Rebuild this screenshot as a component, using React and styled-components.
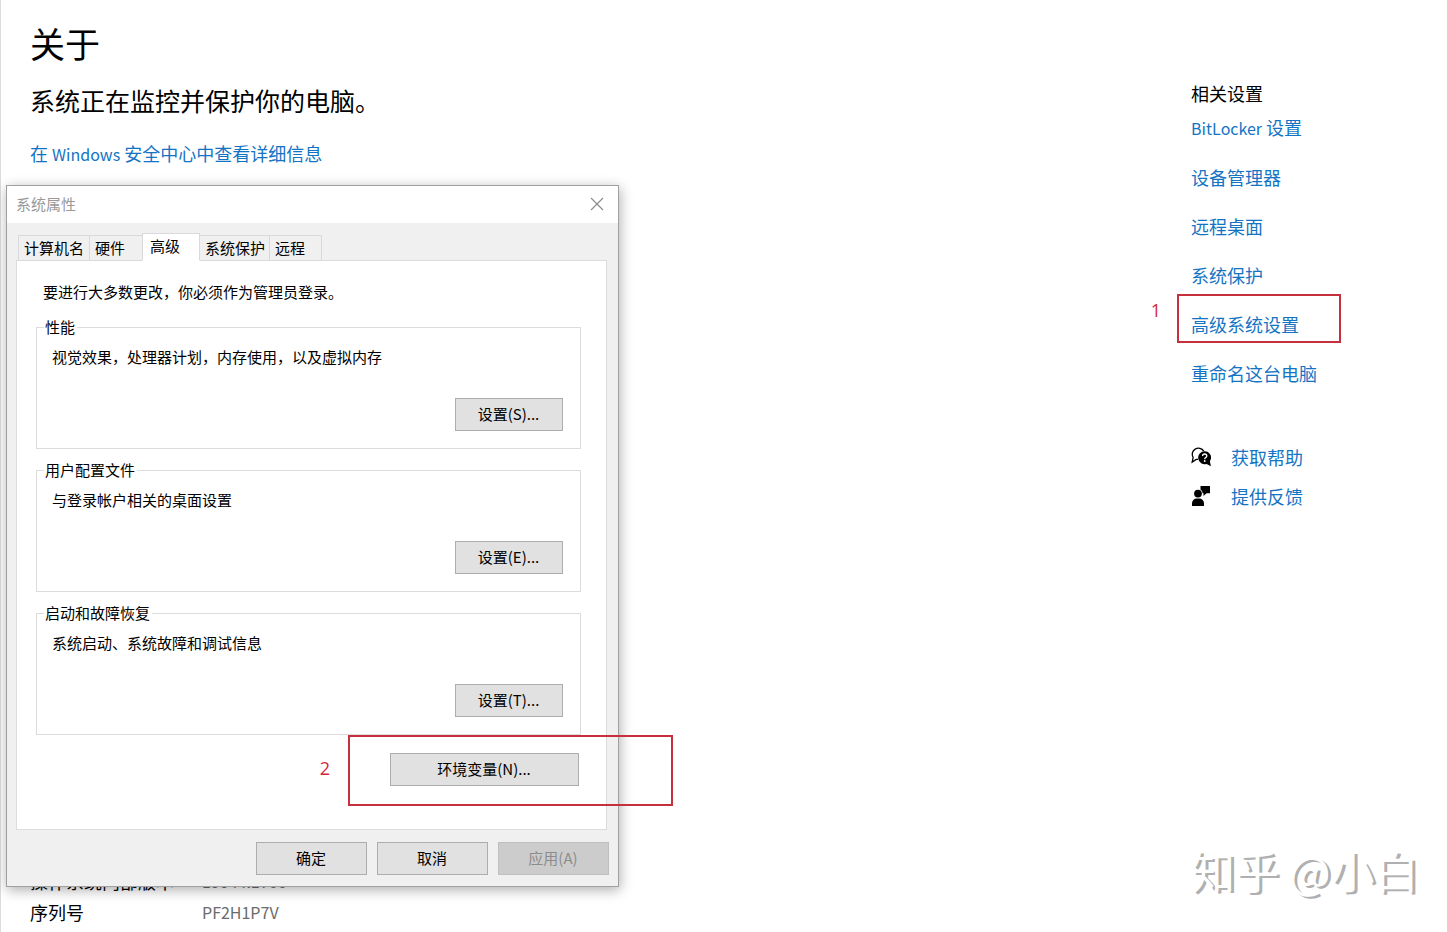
import React from "react";
import styled, { createGlobalStyle } from "styled-components";

const GlobalStyle = createGlobalStyle`
  *, *::before, *::after { box-sizing: border-box; }
  body { margin: 0; background: #fff; }
  body, button {
    font-family: "Noto Sans CJK SC", "Open Sans", sans-serif;
  }
  h1, h2, p, ul, dl, dd { margin: 0; padding: 0; font-weight: 400; }
  ul { list-style: none; }
`;

const Page = styled.div`
  position: relative;
  display: flex;
  justify-content: space-between;
  min-height: 100vh;
  border-left: 1px solid #dcdcdc;
  color: #000;
`;

const Main = styled.main`
  display: flex;
  flex-direction: column;
  align-items: flex-start;
  flex: 1;
  padding: 18px 0 4px 29px;
`;

const Title = styled.h1`
  font-size: 35px;
  line-height: 50px;
`;

const Status = styled.p`
  margin-top: 14px;
  font-size: 25px;
  line-height: 36px;
`;

const Link = styled.a`
  color: #1474c4;
  font-size: 18px;
  line-height: 26px;
  text-decoration: none;
  white-space: nowrap;
`;

const Latin = styled.span`
  font-size: 16px;
`;

const StatusLink = styled(Link)`
  margin-top: 22px;
`;

const Specs = styled.dl`
  display: grid;
  grid-template-columns: 172px auto;
  margin-top: auto;
  font-size: 18px;
  line-height: 31px;
`;

const SpecValue = styled.dd`
  color: #6b6b6b;
  font-size: 16px;
`;

const Aside = styled.aside`
  display: flex;
  flex-direction: column;
  width: 256px;
  padding-top: 80px;
`;

const AsideTitle = styled.h2`
  font-size: 18px;
  line-height: 26px;
`;

const LinkList = styled.ul`
  display: flex;
  flex-direction: column;
  gap: 23px;
  margin-top: 8px;
`;

const LinkItem = styled.li`
  position: relative;
  display: flex;
`;

const HelpList = styled.ul`
  display: flex;
  flex-direction: column;
  gap: 13px;
  margin-top: 58px;
`;

const HelpItem = styled.li`
  display: flex;
  align-items: center;
  gap: 20px;
`;

const Frame = styled.span`
  position: absolute;
  top: ${(p) => p.$top}px;
  left: ${(p) => p.$left}px;
  width: ${(p) => p.$width}px;
  height: ${(p) => p.$height}px;
  border: 2px solid #c5303c;
  pointer-events: none;
`;

const Step = styled.span`
  position: absolute;
  right: 100%;
  top: 50%;
  margin: ${(p) => p.$margin};
  color: #d4283a;
  font-family: "Open Sans", "Noto Sans", sans-serif;
  font-size: 18px;
  line-height: 24px;
`;

const Watermark = styled.div`
  margin: auto 41px 32px auto;
  color: #fff;
  font-size: 44px;
  line-height: 60px;
  white-space: nowrap;
  text-shadow: 3px 2px 0 #b0b0b0;
`;

const Window = styled.section`
  position: absolute;
  top: 185px;
  left: 5px;
  width: 613px;
  border: 1px solid #a0a0a0;
  background: #f0f0f0;
  box-shadow: 1px 3px 12px rgba(0, 0, 0, 0.32);
  font-size: 15px;
  line-height: 20px;
`;

const TitleBar = styled.header`
  display: flex;
  align-items: center;
  justify-content: space-between;
  height: 37px;
  padding: 0 14px 2px 9px;
  background: #fff;
  color: #999;
`;

const WindowTitle = styled.h2`
  font-size: 15px;
`;

const CloseButton = styled.button`
  display: flex;
  padding: 0;
  border: 0;
  background: none;
`;

const WindowBody = styled.div`
  padding: 10px 9px 11px;
`;

const Tabs = styled.div`
  display: flex;
  align-items: flex-end;
  height: 28px;
  margin: 0 0 -1px 2px;
`;

const Tab = styled.button`
  position: relative;
  width: ${(p) => p.$width}px;
  height: ${(p) => (p.$active ? 28 : 26)}px;
  margin-right: -1px;
  padding: 0 0 ${(p) => (p.$active ? 2 : 0)}px ${(p) => (p.$active ? 7 : 5)}px;
  border: 1px solid #d9d9d9;
  border-bottom-color: ${(p) => (p.$active ? "#fff" : "#d9d9d9")};
  background: ${(p) => (p.$active ? "#fff" : "#f0f0f0")};
  z-index: ${(p) => (p.$active ? 1 : 0)};
  color: #000;
  font-size: 15px;
  line-height: 24px;
  text-align: left;
  white-space: nowrap;
`;

const Panel = styled.div`
  width: 591px;
  padding: 21px 25px 43px 19px;
  border: 1px solid #dcdcdc;
  background: #fff;
`;

const Notice = styled.p`
  padding-left: 7px;
`;

const Groups = styled.div`
  display: flex;
  flex-direction: column;
  gap: 11px;
  margin-top: 15px;
`;

const Group = styled.fieldset`
  min-width: 0;
  margin: 0;
  padding: 10px 17px 17px 15px;
  border: 1px solid #dcdcdc;
`;

const Legend = styled.legend`
  margin-left: -8px;
  padding: 0 2px 0 1px;
`;

const ButtonRow = styled.div`
  display: flex;
  justify-content: flex-end;
  gap: ${(p) => p.$gap || 0}px;
  margin: ${(p) => p.$margin || 0};
`;

const Button = styled.button`
  width: ${(p) => p.$width}px;
  height: 33px;
  padding: 0 1px 2px 0;
  border: 1px solid #adadad;
  background: #e1e1e1;
  color: #000;
  font-size: 15px;
  line-height: 20px;

  &:disabled {
    border-color: #bfbfbf;
    background: #ccc;
    color: #8c8c8c;
  }
`;

const Marked = styled.div`
  position: relative;
  display: flex;
`;

const HelpIcon = () => (
  <svg width="20" height="20" viewBox="0 0 20 20" aria-hidden="true">
    <path
      d="M7 12.400H5.200L1.200 15l.9-4.300A5.900 5.900 0 1 1 12.800 4.200"
      fill="none"
      stroke="#000"
      strokeWidth="1.3"
    />
    <path d="M13.600 4.200a6.400 6.400 0 0 1 5.300 10l1 5-4.300-2.300A6.500 6.500 0 1 1 13.600 4.200z" />
    <path
      d="M11.600 9c0-2.700 4.200-2.600 4.200-.1 0 1.700-2.100 1.600-2.100 3.300"
      fill="none"
      stroke="#fff"
      strokeWidth="1.3"
    />
    <circle cx="13.700" cy="14" r="0.9" fill="#fff" />
  </svg>
);

const FeedbackIcon = () => (
  <svg width="20" height="20" viewBox="0 0 20 20" aria-hidden="true">
    <path d="M9.500 0H19v7.200h-3.400L12.500 10V7.200h-.8A5 5 0 0 0 9.500 3.600z" />
    <circle cx="7" cy="7.6" r="3.9" />
    <path d="M1 20v-2.500A4.800 4.800 0 0 1 5.800 12.600h2.400A4.800 4.800 0 0 1 13 17.500V20z" />
  </svg>
);

const CloseIcon = () => (
  <svg width="14" height="14" viewBox="0 0 14 14" aria-hidden="true">
    <path d="M1 1 13 13M13 1 1 13" stroke="#8a8a8a" strokeWidth="1.1" />
  </svg>
);

const tabs = [
  { label: "计算机名", width: 72 },
  { label: "硬件", width: 54 },
  { label: "高级", width: 58, active: true },
  { label: "系统保护", width: 71 },
  { label: "远程", width: 53 },
];

const groups = [
  { title: "性能", text: "视觉效果，处理器计划，内存使用，以及虚拟内存", button: "设置(S)..." },
  { title: "用户配置文件", text: "与登录帐户相关的桌面设置", button: "设置(E)..." },
  { title: "启动和故障恢复", text: "系统启动、系统故障和调试信息", button: "设置(T)..." },
];

const related = [
  { id: "bitlocker", latin: "BitLocker", label: " 设置" },
  { id: "devices", label: "设备管理器" },
  { id: "remote", label: "远程桌面" },
  { id: "protection", label: "系统保护" },
  { id: "advanced", label: "高级系统设置", step: "1" },
  { id: "rename", label: "重命名这台电脑" },
];

function SystemProperties() {
  return (
    <Window role="dialog" aria-labelledby="window-title">
      <TitleBar>
        <WindowTitle id="window-title">系统属性</WindowTitle>
        <CloseButton type="button" aria-label="关闭">
          <CloseIcon />
        </CloseButton>
      </TitleBar>
      <WindowBody>
        <Tabs role="tablist">
          {tabs.map((t) => (
            <Tab
              key={t.label}
              type="button"
              role="tab"
              aria-selected={!!t.active}
              $active={t.active}
              $width={t.width}
            >
              {t.label}
            </Tab>
          ))}
        </Tabs>
        <Panel role="tabpanel">
          <Notice>要进行大多数更改，你必须作为管理员登录。</Notice>
          <Groups>
            {groups.map((g) => (
              <Group key={g.title}>
                <Legend>{g.title}</Legend>
                <p>{g.text}</p>
                <ButtonRow $margin="31px 0 0">
                  <Button type="button" $width={108}>{g.button}</Button>
                </ButtonRow>
              </Group>
            ))}
          </Groups>
          <ButtonRow $margin="18px 2px 0 0">
            <Marked>
              <Button type="button" $width={189}>环境变量(N)...</Button>
              <Frame $top={-18} $left={-42} $width={325} $height={71}>
                <Step $margin="-15px 20px 0 0">2</Step>
              </Frame>
            </Marked>
          </ButtonRow>
        </Panel>
        <ButtonRow $gap={10} $margin="12px 0 0">
          <Button type="button" $width={111}>确定</Button>
          <Button type="button" $width={111}>取消</Button>
          <Button type="button" $width={111} disabled>应用(A)</Button>
        </ButtonRow>
      </WindowBody>
    </Window>
  );
}

export default function App() {
  return (
    <>
      <GlobalStyle />
      <Page>
        <Main>
          <Title>关于</Title>
          <Status>系统正在监控并保护你的电脑。</Status>
          <StatusLink href="#security">
            在 <Latin>Windows</Latin> 安全中心中查看详细信息
          </StatusLink>
          <Specs>
            <dt>操作系统内部版本</dt>
            <SpecValue>19044.1766</SpecValue>
            <dt>序列号</dt>
            <SpecValue>PF2H1P7V</SpecValue>
          </Specs>
        </Main>
        <Aside>
          <AsideTitle>相关设置</AsideTitle>
          <LinkList>
            {related.map(({ id, latin, label, step }) => (
              <LinkItem key={id}>
                <Link href={`#${id}`}>
                  {latin && <Latin>{latin}</Latin>}
                  {label}
                </Link>
                {step && (
                  <Frame $top={-17} $left={-14} $width={164} $height={49}>
                    <Step $margin="-21px 18px 0 0">{step}</Step>
                  </Frame>
                )}
              </LinkItem>
            ))}
          </LinkList>
          <HelpList>
            <HelpItem>
              <HelpIcon />
              <Link href="#help">获取帮助</Link>
            </HelpItem>
            <HelpItem>
              <FeedbackIcon />
              <Link href="#feedback">提供反馈</Link>
            </HelpItem>
          </HelpList>
          <Watermark>知乎 @小白</Watermark>
        </Aside>
        <SystemProperties />
      </Page>
    </>
  );
}
